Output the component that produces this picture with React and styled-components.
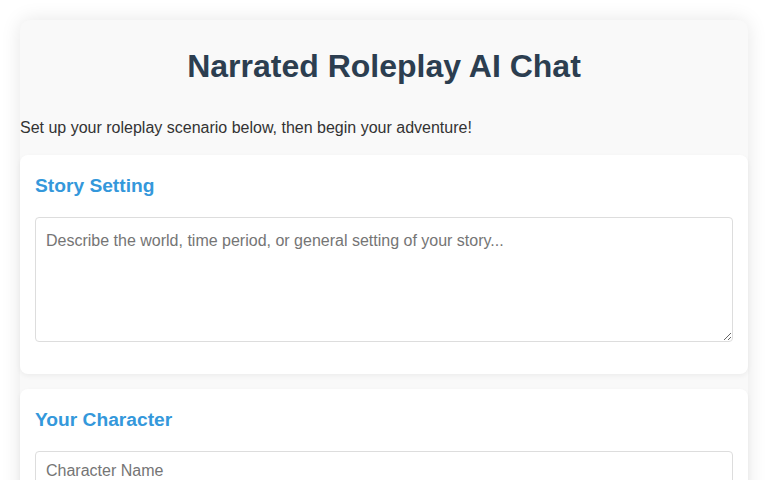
import styled, { createGlobalStyle } from 'styled-components';

const GlobalStyle = createGlobalStyle`
    * { box-sizing: border-box; }
    body {
        margin: 0;
        padding: 20px;
        background: #fff;
        font-family: 'Liberation Sans', Arial, sans-serif;
        color: #333;
    }
`;

const Container = styled.div`
    max-width: 800px;
    margin: 0 auto;
    background: #f9f9f9;
    border-radius: 10px;
    box-shadow: 0 0 20px rgba(0, 0, 0, 0.1);
    padding-bottom: 20px;
    display: flow-root;
`;

const Title = styled.h1`
    margin: 28px 0 0;
    text-align: center;
    font-size: 32px;
    line-height: 37px;
    color: #2c3e50;
`;

const Intro = styled.p`
    margin: 34px 0 18px;
    font-size: 16px;
    line-height: 18px;
    color: #333;
`;

const Section = styled.section`
    background: #fff;
    border-radius: 8px;
    padding: 20px 15px;
    margin-bottom: 15px;
    box-shadow: 0 2px 5px rgba(0, 0, 0, 0.05);
`;

const SectionTitle = styled.h2`
    margin: 0 0 20px;
    font-size: 19.2px;
    line-height: 22px;
    color: #3498db;
`;

const TextArea = styled.textarea`
    display: block;
    width: 100%;
    height: 125px;
    margin-bottom: 12px;
    padding: 10px;
    border: 1px solid #ddd;
    border-radius: 4px;
    font-family: inherit;
    font-size: 16px;
    line-height: 1.6;
    color: #333;
    &::placeholder { color: #757575; }
`;

const Input = styled.input`
    display: block;
    width: 100%;
    margin-bottom: 12px;
    padding: 10px;
    border: 1px solid #ddd;
    border-radius: 4px;
    font-family: inherit;
    font-size: 16px;
    line-height: 18px;
    color: #333;
    &::placeholder { color: #757575; }
`;

export default function App() {
    return (
        <>
            <GlobalStyle />
            <Container>
                <Title>Narrated Roleplay AI Chat</Title>
                <Intro>Set up your roleplay scenario below, then begin your adventure!</Intro>
                <Section>
                    <SectionTitle>Story Setting</SectionTitle>
                    <TextArea placeholder='Describe the world, time period, or general setting of your story...' />
                </Section>
                <Section>
                    <SectionTitle>Your Character</SectionTitle>
                    <Input placeholder='Character Name' />
                    <TextArea placeholder='Describe your character...' />
                </Section>
            </Container>
        </>
    );
}
